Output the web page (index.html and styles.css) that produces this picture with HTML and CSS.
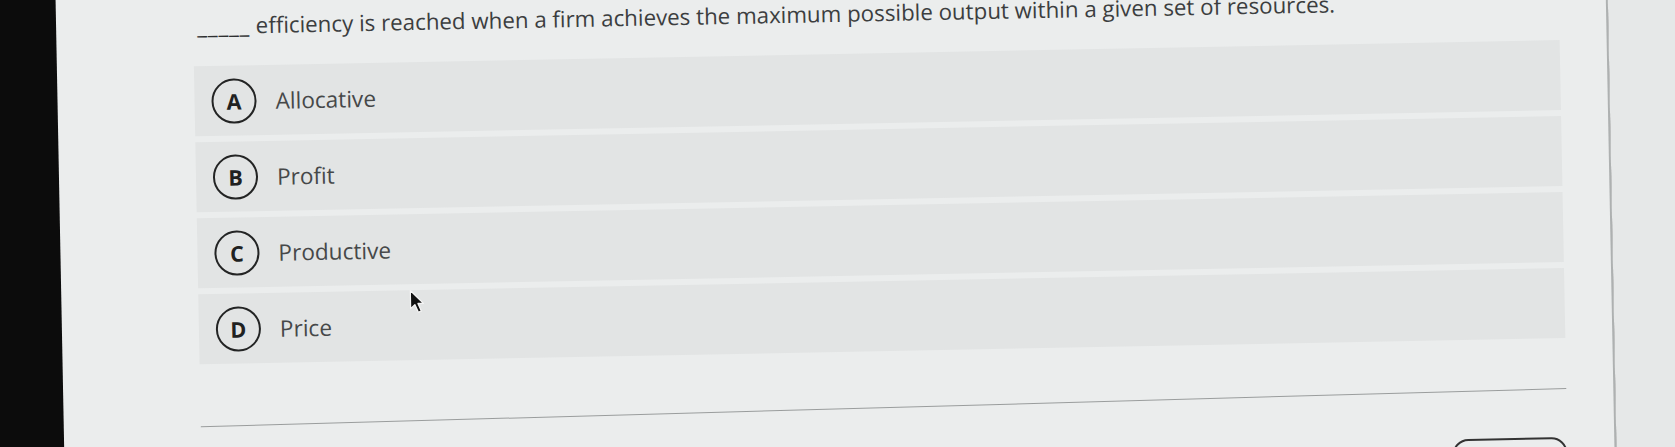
FILE: index.html
```html
<!DOCTYPE html>
<html lang="en">
<head>
<meta charset="utf-8">
<title>Question</title>
<link rel="stylesheet" href="styles.css">
</head>
<body>
<div class="screen">
  <div class="bezel"></div>
  <main class="panel">
    <p class="question"><span class="blank">_____</span> efficiency is reached when a firm achieves the maximum possible output within a given set of resources.</p>
    <ul class="options">
      <li class="option"><span class="badge">A</span><span class="label">Allocative</span></li>
      <li class="option"><span class="badge">B</span><span class="label">Profit</span></li>
      <li class="option"><span class="badge">C</span><span class="label">Productive</span></li>
      <li class="option"><span class="badge">D</span><span class="label">Price</span></li>
    </ul>
    <hr class="divider">
    <div class="actions"><div class="btn"></div></div>
  </main>
  <div class="side"></div>
  <svg class="cursor" width="15" height="25" viewBox="0 0 14 23" aria-hidden="true">
    <path d="M1 1 V18 L5 14.3 L8.2 21.5 L11 20.3 L7.9 13.3 H13 Z" fill="#111" stroke="#f4f4f4" stroke-width="1.2" stroke-linejoin="round"/>
  </svg>
</div>
</body>
</html>
```
FILE: styles.css
```css
html, body {
  margin: 0;
  height: 100%;
  overflow: hidden;
  background: #0b0b0b;
}

.screen {
  position: relative;
  display: flex;
  width: 1715px;
  height: 487px;
  margin: -20px 0 0 -20px;
  transform: rotate(-1.1deg);
  transform-origin: 50% 50%;
  font-family: "Open Sans", "Noto Sans", "Liberation Sans", sans-serif;
}

.bezel {
  flex: none;
  width: 80px;
  background: #0c0c0c;
}

.panel {
  flex: none;
  width: 1552px;
  box-sizing: border-box;
  background: #ebeded;
  border-right: 2px solid #aeb1b1;
  padding: 19px 47px 0 137px;
  display: flex;
  flex-direction: column;
}

.question {
  margin: 0;
  font-size: 22.3px;
  line-height: 30px;
  color: #3c3e3f;
  white-space: nowrap;
}

.blank {
  margin-left: 4px;
  letter-spacing: 0.8px;
  color: #2e3031;
}

.options {
  list-style: none;
  margin: 25px 0 0;
  padding: 0;
  display: flex;
  flex-direction: column;
  gap: 6px;
}

.option {
  height: 70px;
  display: flex;
  align-items: center;
  gap: 19px;
  padding-left: 17px;
  background: #e2e4e4;
}

.badge {
  flex: none;
  width: 45px;
  height: 45px;
  box-sizing: border-box;
  border: 2.7px solid #232424;
  border-radius: 50%;
  display: flex;
  align-items: center;
  justify-content: center;
  font-size: 21.5px;
  font-weight: 700;
  color: #202121;
}

.label {
  font-size: 22.6px;
  color: #464849;
}

.divider {
  margin: 56px 0 0;
  height: 0;
  border: 0;
  border-top: 1.5px solid #9a9d9d;
  transform: rotate(-0.5deg);
}

.actions {
  display: flex;
  justify-content: flex-end;
  margin-top: 42px;
}

.btn {
  width: 115px;
  height: 44px;
  box-sizing: border-box;
  border: 2px solid #333;
  border-radius: 16px;
}

.side {
  flex: 1;
  background: #e6e8e8;
}

.cursor {
  position: absolute;
  left: 428px;
  top: 301px;
}
```
